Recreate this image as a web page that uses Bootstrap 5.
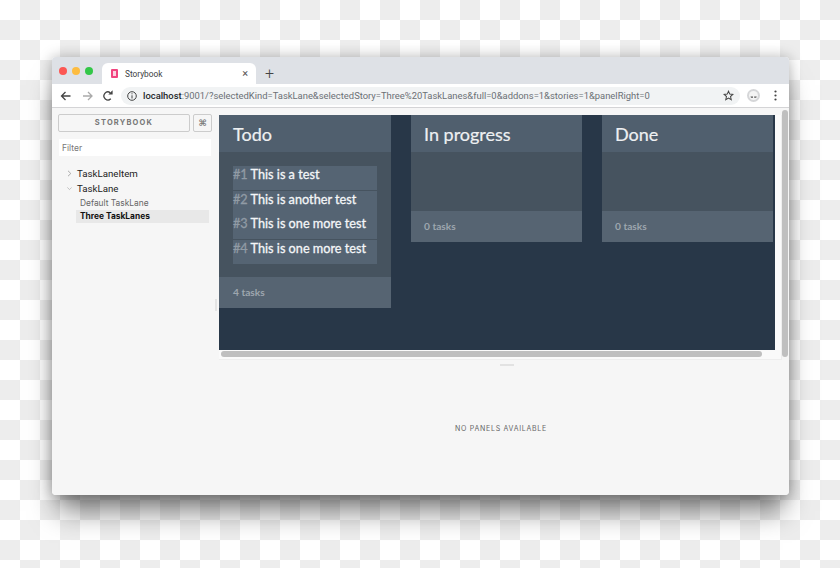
<!DOCTYPE html>
<html lang="en">
<head>
<meta charset="utf-8">
<title>Storybook</title>
<link rel="stylesheet" href="https://cdn.jsdelivr.net/npm/bootstrap@5.3.0/dist/css/bootstrap.min.css">
<style>
html,body{height:100%;}
body{margin:0;overflow:hidden;padding:57px 51px 0 52px;
  background:conic-gradient(#ededed 25%,#fff 0 50%,#ededed 0 75%,#fff 0) 0 0/40px 40px;
  font-family:"Inter","Liberation Sans",sans-serif;}
.win{height:438px;border-radius:4px;background:#f6f6f6;overflow:hidden;}
.win-wrap{border-radius:4px;box-shadow:0 22px 26px -6px rgba(0,0,0,.5),0 0 14px rgba(0,0,0,.28);}
.tabbar{height:27px;background:#dee1e6;padding-left:7px;}
.dot{width:8px;height:8px;border-radius:50%;margin-top:10px;margin-right:5px;}
.dr{background:#fc5753}.dy{background:#fdbc40}.dg{background:#33c748}
.chrome-tab{width:154px;height:21px;margin:6px 0 0 4px;background:#fff;border-radius:6px 6px 0 0;padding:0 8px 0 9px;
  font:8.3px "Roboto",sans-serif;color:#3c4043;}
.fav{width:7px;height:9px;background:#f1447f;border-radius:1px;margin-right:7px;display:flex;align-items:center;justify-content:center;}
.fav i{display:block;width:3px;height:5px;background:#fbd0df;}
.tab-x{margin-left:auto;font-size:11px;color:#555;line-height:1;}
.tab-new{margin-left:9px;margin-top:7px;font:300 16px/20px "Roboto",sans-serif;color:#444;}
.toolbar{height:24px;background:#fff;border-bottom:1px solid #d4d4d6;padding:0 0 0 7px;}
.tbtn{width:21px;height:16px;flex:none;}
.tbtn.tb-r{width:20px;}
.pill{width:619px;height:18px;border-radius:9px;background:#f1f3f4;padding:0 6px 0 6px;
  font:9.41px "Roboto",sans-serif;color:#6b7074;white-space:nowrap;}
.pill b{font-weight:500;color:#24282b;}
.pill .url-txt{margin-left:6px;}
.avatar{margin-left:7px;flex:none;}
.kebab{margin-left:14px;flex:none;}
.stage{height:387px;}
.side{width:167px;flex:none;padding:6px 0 0 6px;position:relative;}
.btn.sb-btn{width:132px;height:18px;padding:0;border:1px solid #ccc;border-radius:2px;background:#f6f6f6;
  font:700 7.5px/16px "Inter","Liberation Sans",sans-serif;letter-spacing:1.2px;color:#777;}
.btn.sb-cmd{width:19px;height:18px;padding:0;margin-left:3px;border:1px solid #ccc;border-radius:2px;background:#f6f6f6;
  font:700 9px/16px "DejaVu Sans",sans-serif;color:#777;}
.form-control.sb-filter{width:152px;height:17px;min-height:0;margin:7px 0 0 1px;padding:0 3px;border:0;border-radius:0;background:#fff;
  font:8.5px "Inter","Liberation Sans",sans-serif;color:#757575;}
.form-control.sb-filter::placeholder{color:#777;opacity:1;}
.tree{margin-top:10px;}
.tree-top{height:15px;padding-left:9px;font:9.7px/15px "Roboto",sans-serif;color:#222;}
.tree-top svg{width:5px;height:7px;margin-right:5px;flex:none;}
.tree-sub{height:13px;margin-left:18px;width:133px;padding-left:4px;font-size:8.4px;line-height:13px;color:#666;}
.tree-sub.first{margin-top:1px;}
.tree-sub.on{background:#e8e8e8;color:#111;font-weight:700;}
.drag-v{position:absolute;left:163px;top:191px;width:2px;height:12px;background:#e4e4e4;}
.main{flex:1;min-width:0;position:relative;}
.frame{width:563px;margin-top:7px;height:245px;background:#fafafa;border-bottom:1px solid #eee;border-right:1px solid #eee;}
.preview{width:556px;height:235px;background:#283748;overflow:hidden;gap:20px;font-family:"Lato",sans-serif;}
.lane{width:172px;flex:none;background:#46535f;}
.lane-3{width:171px}
.lane-h{height:37px;background:#505f6e;color:#eef0f2;font-size:18px;line-height:39px;padding-left:14px;-webkit-text-stroke:.2px #eef0f2;}
.lane-3 .lane-h,.lane-3 .lane-f{padding-left:13px;}
.lane-b{padding:14px 14px 0;}
.lane-b.none{height:59px;padding:0;}
.lane-f{height:31px;background:#566472;color:#9da6ae;font-size:10.2px;font-weight:700;line-height:31px;padding-left:14px;}
.task{height:24px;margin-bottom:.6px;background:#556473;color:#f4f6f8;font-size:12.7px;line-height:16px;-webkit-text-stroke:.3px #f4f6f8;}
.task span{color:#919ba5;-webkit-text-stroke:.3px #919ba5;}
.tasks{height:97px;margin-bottom:14px;}
.hbar{height:6px;width:541px;margin:1px 0 0 2px;border-radius:3px;background:#bfbfbf;}
.vbar{position:absolute;right:1px;top:2px;width:6px;height:247px;border-radius:3px;background:#bfbfbf;}
.drag-h{width:14px;height:2px;background:#e2e2e2;margin:4px 0 0 281px;}
.nopanels{position:absolute;left:0;width:563px;top:316px;padding-left:1px;text-align:center;font-size:7px;letter-spacing:.72px;color:#666;line-height:10px;}
</style>
</head>
<body>
<div class="win-wrap">
<div class="win d-flex flex-column">
  <div class="tabbar d-flex align-items-start">
    <span class="dot dr"></span><span class="dot dy"></span><span class="dot dg"></span>
    <div class="chrome-tab d-flex align-items-center">
      <span class="fav"><i></i></span><span>Storybook</span><span class="tab-x">×</span>
    </div>
    <div class="tab-new">+</div>
  </div>
  <div class="toolbar d-flex align-items-center">
    <svg class="tbtn" viewBox="0 0 21 16" fill="none" stroke="#444" stroke-width="1.3"><path d="M11.500 8H2.500M6.500 4 2.500 8 6.500 12"/></svg>
    <svg class="tbtn" viewBox="0 0 21 16" fill="none" stroke="#aaa" stroke-width="1.3"><path d="M3 8H12M8 4 12 8 8 12"/></svg>
    <svg class="tbtn tb-r" viewBox="0 0 20 16" fill="none" stroke="#444" stroke-width="1.300"><path d="M9.300 4.700A4 4 0 1 0 9.800 10.800"/><path d="M7.300 6.500h4.300v-4.300z" stroke="none" fill="#444"/></svg>
    <div class="pill d-flex align-items-center">
      <svg width="10" height="10" viewBox="0 0 10 10" fill="none" stroke="#444"><circle cx="5" cy="5" r="4.300"/><path d="M5 4.300V7.500M5 2.300V3.300"/></svg>
      <span class="url-txt"><b>localhost</b>:9001/?selectedKind=TaskLane&amp;selectedStory=Three%20TaskLanes&amp;full=0&amp;addons=1&amp;stories=1&amp;panelRight=0</span>
      <svg class="ms-auto" width="11" height="11" viewBox="0 0 12 12" fill="none" stroke="#444" stroke-width="1.100"><path d="M6 1.300 7.400 4.500 10.800 4.800 8.200 7.100 9 10.500 6 8.700 3 10.500 3.800 7.100 1.200 4.800 4.600 4.500Z"/></svg>
    </div>
    <svg class="avatar" width="13" height="13" viewBox="0 0 13 13"><circle cx="6.500" cy="6.500" r="6.500" fill="#d5d6d8"/><circle cx="6.500" cy="6.500" r="4.500" fill="#f4f4f4"/><path d="M3.500 7.500h2.500v1.200h-2zM7.200 7.500h2.500l-.5 1.200h-2z" fill="#555"/></svg>
    <svg class="kebab" width="3" height="11" viewBox="0 0 3 11" fill="#444"><circle cx="1.500" cy="1.500" r="1.100"/><circle cx="1.500" cy="5.500" r="1.100"/><circle cx="1.500" cy="9.500" r="1.100"/></svg>
  </div>
  <div class="stage d-flex">
    <aside class="side">
      <div class="d-flex">
        <button class="btn sb-btn" type="button">STORYBOOK</button>
        <button class="btn sb-cmd" type="button">⌘</button>
      </div>
      <input class="form-control sb-filter" placeholder="Filter">
      <div class="tree">
        <div class="tree-top d-flex align-items-center"><svg viewBox="0 0 5 7" fill="none" stroke="#999" stroke-width=".8"><path d="M1 .8 3.800 3.500 1 6.200"/></svg>TaskLaneItem</div>
        <div class="tree-top d-flex align-items-center"><svg viewBox="0 0 7 7" fill="none" stroke="#999" stroke-width=".8"><path d="M.5 2 3.500 5 6.500 2"/></svg>TaskLane</div>
        <div class="tree-sub first">Default TaskLane</div>
        <div class="tree-sub on">Three TaskLanes</div>
      </div>
      <div class="drag-v"></div>
    </aside>
    <main class="main">
      <div class="frame">
        <div class="preview d-flex align-items-start">
          <section class="lane">
            <div class="lane-h">Todo</div>
            <div class="lane-b">
              <div class="tasks">
                <div class="task"><span>#1</span> This is a test</div>
                <div class="task"><span>#2</span> This is another test</div>
                <div class="task"><span>#3</span> This is one more test</div>
                <div class="task"><span>#4</span> This is one more test</div>
              </div>
            </div>
            <div class="lane-f">4 tasks</div>
          </section>
          <section class="lane lane-3">
            <div class="lane-h">In progress</div>
            <div class="lane-b none"></div>
            <div class="lane-f">0 tasks</div>
          </section>
          <section class="lane lane-3">
            <div class="lane-h">Done</div>
            <div class="lane-b none"></div>
            <div class="lane-f">0 tasks</div>
          </section>
        </div>
        <div class="hbar"></div>
      </div>
      <div class="drag-h"></div>
      <div class="vbar"></div>
      <div class="nopanels">NO PANELS AVAILABLE</div>
    </main>
  </div>
</div>
</div>
<script src="https://cdn.jsdelivr.net/npm/bootstrap@5.3.0/dist/js/bootstrap.bundle.min.js"></script>
</body>
</html>
